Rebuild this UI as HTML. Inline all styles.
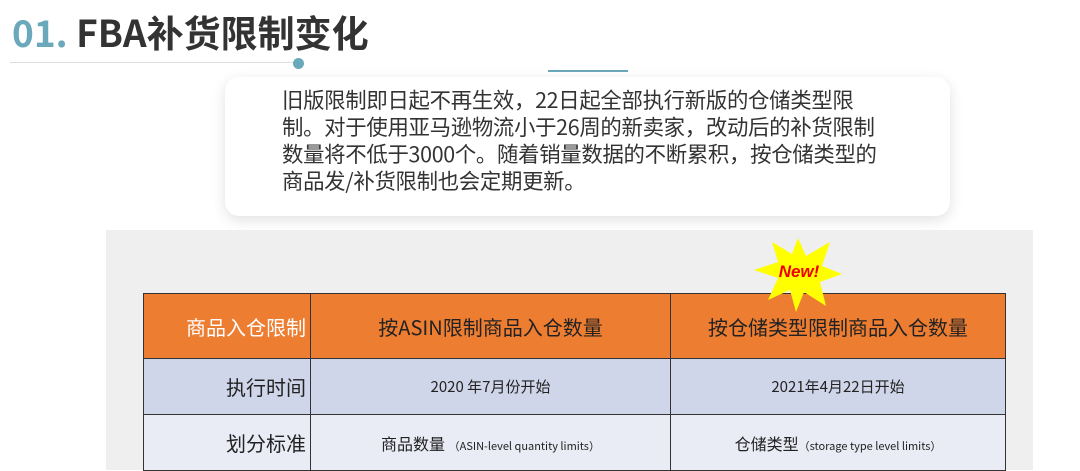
<!DOCTYPE html><html><head><meta charset="utf-8"><style>
body{margin:0;width:1080px;height:464px;overflow:hidden;background:#fff;font-family:"Liberation Sans","Noto Sans CJK SC",sans-serif;position:relative}
.a{position:absolute}
.title{left:12px;top:6px;font-size:37px;font-weight:bold;color:#333;white-space:nowrap;font-family:"Noto Sans CJK SC",sans-serif;line-height:50px}
.title span{color:#6aa9bb}
.card{left:225px;top:77px;width:725px;height:139px;background:#fff;border-radius:14px;box-shadow:0 4px 14px rgba(0,0,0,.12)}
.txt{left:282px;top:86px;font-size:21.4px;line-height:27px;color:#333;font-family:"Noto Sans CJK SC",sans-serif;white-space:nowrap;letter-spacing:-0.3px}
.panel{left:106px;top:230px;width:927px;height:240px;background:#efefef}
table{position:absolute;left:143px;top:293px;border-collapse:collapse;font-family:"Noto Sans CJK SC",sans-serif}
td{border:1px solid #333;text-align:center;padding:0;color:#222}
.h td{background:#ed7d31;height:64px;font-size:20px}
.r1 td{background:#d0d6ea;height:55px;font-size:15px}
.r2 td{background:#e9ebf5;height:55px;font-size:16px}
td.l{text-align:right;padding-right:4px;font-size:20px}
</style></head><body>
<div class="a title"><span>01.</span> FBA补货限制变化</div>
<div class="a" style="left:10px;top:62px;width:288px;height:1px;background:#ddd"></div>
<div class="a" style="left:293px;top:58px;width:11px;height:11px;border-radius:50%;background:#6aa9bb"></div>
<div class="a" style="left:548px;top:70px;width:80px;height:2px;background:#6aa9bb"></div>
<div class="a card"></div>
<div class="a txt">旧版限制即日起不再生效，22日起全部执行新版的仓储类型限<br>制。对于使用亚马逊物流小于26周的新卖家，改动后的补货限制<br>数量将不低于3000个。随着销量数据的不断累积，按仓储类型的<br>商品发/补货限制也会定期更新。</div>
<div class="a panel"></div>
<table>
<tr class="h"><td class="l" style="width:162px;color:#fff">商品入仓限制</td><td style="width:359px">按ASIN限制商品入仓数量</td><td style="width:334px">按仓储类型限制商品入仓数量</td></tr>
<tr class="r1"><td class="l">执行时间</td><td>2020 年7月份开始</td><td>2021年4月22日开始</td></tr>
<tr class="r2"><td class="l">划分标准</td><td>商品数量 <span style="font-size:11px">（ASIN-level quantity limits）</span></td><td>仓储类型<span style="font-size:11px">（storage type level limits）</span></td></tr>
</table>
<svg class="a" style="left:750px;top:234px" width="95" height="80" viewBox="0 0 95 80"><polygon points="48,4 56,22 80,8 72,32 92,40 70,48 76,72 54,58 46,78 40,56 18,66 28,44 4,36 28,28 22,8 42,20" fill="#ffff00"/><text x="49" y="43" font-size="17" font-style="italic" font-weight="bold" fill="#e00" text-anchor="middle" font-family="Liberation Sans">New!</text></svg>
</body></html>
